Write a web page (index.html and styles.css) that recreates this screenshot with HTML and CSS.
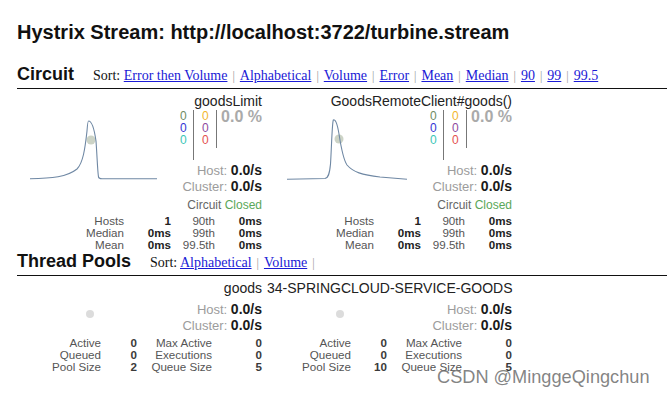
FILE: index.html
```html
<!DOCTYPE html>
<html>
<head>
<meta charset="utf-8">
<link rel="stylesheet" href="styles.css">
</head>
<body>
<div class="page">
  <h1 class="title">Hystrix Stream: http://localhost:3722/turbine.stream</h1>

  <div class="section-head">
    <h2>Circuit</h2>
    <div class="sort">Sort: <a href="#">Error then Volume</a><span class="sep">|</span><a href="#">Alphabetical</a><span class="sep">|</span><a href="#">Volume</a><span class="sep">|</span><a href="#">Error</a><span class="sep">|</span><a href="#">Mean</a><span class="sep">|</span><a href="#">Median</a><span class="sep">|</span><a href="#">90</a><span class="sep">|</span><a href="#">99</a><span class="sep">|</span><a href="#">99.5</a></div>
  </div>

  <div class="monitors circuits">
    <div class="monitor">
      <div class="name">goodsLimit</div>
      <div class="mbody">
        <svg class="chart" width="160" height="104" viewBox="0 0 160 104">
          <circle cx="74" cy="31" r="4.5" fill="#c6cec0" opacity="0.9"/>
          <path d="M13,69.7 C35,69.5 50,68 60,60 C66,54 68,40 70,22 C70.5,15 71,12 71.5,12 C74,12 77,18 79,32 C80,45 80.5,62 81.5,68 C82,69.7 83,69.7 85,69.7 L140,69.7" fill="none" stroke="#6f88a4" stroke-width="1.1"/>
        </svg>
        <div class="side">
          <div class="counters">
            <div class="ccol c1"><span class="success">0</span><span class="short">0</span><span class="badreq">0</span></div>
            <div class="ccol c2"><span class="timeout">0</span><span class="rejected">0</span><span class="failure">0</span></div>
            <div class="pct">0.0 %</div>
          </div>
          <div class="rate"><span class="lbl">Host: </span><span class="val">0.0/s</span></div>
          <div class="rate"><span class="lbl">Cluster: </span><span class="val">0.0/s</span></div>
          <div class="circuit">Circuit <span class="closed">Closed</span></div>
        </div>
      </div>
      <div class="stats">
        <span class="l">Hosts</span><span class="v">1</span><span class="l">90th</span><span class="v">0ms</span>
        <span class="l">Median</span><span class="v">0ms</span><span class="l">99th</span><span class="v">0ms</span>
        <span class="l">Mean</span><span class="v">0ms</span><span class="l">99.5th</span><span class="v">0ms</span>
      </div>
    </div>

    <div class="monitor">
      <div class="name">GoodsRemoteClient#goods()</div>
      <div class="mbody">
        <svg class="chart" width="160" height="104" viewBox="0 0 160 104">
          <circle cx="72" cy="30" r="4.5" fill="#c6cec0" opacity="0.9"/>
          <path d="M20,70.3 L58,69.5 C61,69 62.5,66 63.5,55 C64.5,40 65,15 66.3,11 C68,10 70,13 72,25 C74,38 76,50 80,56 C86,63 95,66 113,68 L140,70.3" fill="none" stroke="#6f88a4" stroke-width="1.1"/>
        </svg>
        <div class="side">
          <div class="counters">
            <div class="ccol c1"><span class="success">0</span><span class="short">0</span><span class="badreq">0</span></div>
            <div class="ccol c2"><span class="timeout">0</span><span class="rejected">0</span><span class="failure">0</span></div>
            <div class="pct">0.0 %</div>
          </div>
          <div class="rate"><span class="lbl">Host: </span><span class="val">0.0/s</span></div>
          <div class="rate"><span class="lbl">Cluster: </span><span class="val">0.0/s</span></div>
          <div class="circuit">Circuit <span class="closed">Closed</span></div>
        </div>
      </div>
      <div class="stats">
        <span class="l">Hosts</span><span class="v">1</span><span class="l">90th</span><span class="v">0ms</span>
        <span class="l">Median</span><span class="v">0ms</span><span class="l">99th</span><span class="v">0ms</span>
        <span class="l">Mean</span><span class="v">0ms</span><span class="l">99.5th</span><span class="v">0ms</span>
      </div>
    </div>
  </div>

  <div class="section-head">
    <h2>Thread Pools</h2>
    <div class="sort">Sort: <a href="#">Alphabetical</a><span class="sep">|</span><a href="#">Volume</a><span class="sep">|</span></div>
  </div>

  <div class="monitors pools">
    <div class="monitor">
      <div class="name">goods</div>
      <div class="mbody">
        <div class="dotarea"><span class="dot"></span></div>
        <div class="side">
          <div class="rate"><span class="lbl">Host: </span><span class="val">0.0/s</span></div>
          <div class="rate"><span class="lbl">Cluster: </span><span class="val">0.0/s</span></div>
        </div>
      </div>
      <div class="pstats">
        <span class="l">Active</span><span class="v">0</span><span class="l">Max Active</span><span class="v">0</span>
        <span class="l">Queued</span><span class="v">0</span><span class="l">Executions</span><span class="v">0</span>
        <span class="l">Pool Size</span><span class="v">2</span><span class="l">Queue Size</span><span class="v">5</span>
      </div>
    </div>

    <div class="monitor">
      <div class="name">34-SPRINGCLOUD-SERVICE-GOODS</div>
      <div class="mbody">
        <div class="dotarea"><span class="dot"></span></div>
        <div class="side">
          <div class="rate"><span class="lbl">Host: </span><span class="val">0.0/s</span></div>
          <div class="rate"><span class="lbl">Cluster: </span><span class="val">0.0/s</span></div>
        </div>
      </div>
      <div class="pstats">
        <span class="l">Active</span><span class="v">0</span><span class="l">Max Active</span><span class="v">0</span>
        <span class="l">Queued</span><span class="v">0</span><span class="l">Executions</span><span class="v">0</span>
        <span class="l">Pool Size</span><span class="v">10</span><span class="l">Queue Size</span><span class="v">5</span>
      </div>
    </div>
  </div>
</div>
<div class="watermark">CSDN @MinggeQingchun</div>
</body>
</html>
```

FILE: styles.css
```css
html, body {
  margin: 0;
  padding: 0;
  background: #fff;
}
body {
  font-family: "Liberation Sans", Arial, sans-serif;
  color: #111;
  position: relative;
  width: 667px;
  height: 396px;
  overflow: hidden;
}
.page {
  padding-left: 17px;
}
.title {
  margin: 20px 0 0 0;
  font-size: 20px;
  line-height: 24px;
  font-weight: bold;
  color: #111;
}
.section-head {
  display: flex;
  align-items: baseline;
  gap: 19px;
  margin-top: 21px;
  padding-bottom: 4px;
  border-bottom: 1px solid #111;
}
.section-head h2 {
  margin: 0;
  font-size: 18px;
  line-height: 18px;
  font-weight: bold;
  color: #111;
}
.monitors + .section-head {
  margin-top: 0;
}
.sort {
  font-family: "Liberation Serif", "Times New Roman", serif;
  font-size: 14px;
  color: #111;
}
.sort a {
  color: #1a1ad6;
  text-decoration: underline;
}
.sep {
  color: #999;
  font-size: 12px;
  margin: 0 5px;
}
.monitors {
  display: flex;
  gap: 5px;
}
.circuits .monitor {
  padding-bottom: 1px;
}
.monitor {
  width: 245px;
  margin-top: 4px;
}
.name {
  font-size: 14px;
  line-height: 16px;
  text-align: right;
  color: #222;
  white-space: nowrap;
}
.mbody {
  display: flex;
}
.chart {
  display: block;
  width: 160px;
  height: 104px;
  flex: none;
}
.side {
  width: 85px;
  flex: none;
  text-align: right;
}
.counters {
  display: flex;
  align-items: flex-start;
}
.ccol {
  display: flex;
  flex-direction: column;
  font-size: 12px;
  line-height: 12px;
  margin-top: 1px;
  border-right: 1px solid #777;
  box-sizing: border-box;
  text-align: left;
}
.c1 {
  width: 17px;
  padding-left: 3px;
  padding-bottom: 14px;
}
.c2 {
  width: 23px;
  padding-left: 8px;
  padding-bottom: 2px;
}
.pct {
  flex: 1;
  text-align: right;
  font-size: 16px;
  line-height: 16px;
  font-weight: bold;
  color: #aaa;
}
.success { color: #6f8c62; }
.short { color: #3535d4; }
.badreq { color: #3cc6b6; }
.timeout { color: #f2b62e; }
.rejected { color: #8e4aa0; }
.failure { color: #e4504e; }

.rate {
  font-size: 14px;
  line-height: 16px;
  height: 16px;
  white-space: nowrap;
}
.counters + .rate {
  margin-top: 2px;
}
.lbl {
  font-size: 13px;
  color: #9c9c9c;
}
.val {
  font-size: 14px;
  font-weight: bold;
  color: #1a1a1a;
}
.circuit {
  margin-top: 3px;
  font-size: 12px;
  line-height: 16px;
  color: #666;
}
.closed {
  color: #5aa85a;
}
.stats, .pstats {
  display: grid;
  font-size: 11.6px;
  line-height: 12px;
  text-align: right;
  white-space: nowrap;
}
.stats {
  margin-top: 2px;
  grid-template-columns: 107px 47px 44px 47px;
}
.pstats {
  margin-top: 4px;
  grid-template-columns: 84px 36px 75px 50px;
}
.l {
  color: #555;
}
.v {
  font-weight: bold;
  color: #222;
}
.pstats .v {
  color: #3a3a3a;
}
.dotarea {
  width: 160px;
  height: 37px;
  flex: none;
}
.dot {
  display: block;
  width: 8px;
  height: 8px;
  border-radius: 50%;
  background: #dcdcdc;
  margin: 14px 0 0 69px;
}
.pools .side {
  padding-top: 5px;
}
.watermark {
  position: absolute;
  left: 437px;
  top: 366px;
  font-family: "Liberation Sans", Arial, sans-serif;
  font-size: 18.2px;
  line-height: 22px;
  color: rgba(110, 110, 110, 0.85);
  white-space: nowrap;
}
```
